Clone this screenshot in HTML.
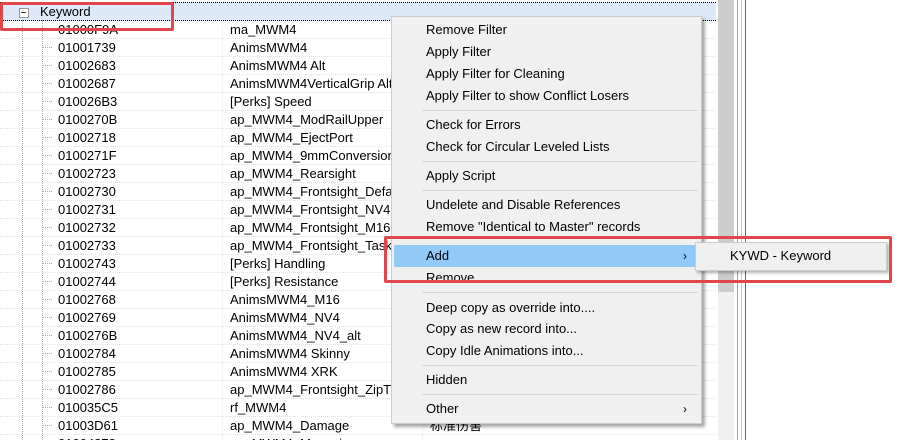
<!DOCTYPE html>
<html style="overflow:hidden;height:440px"><head><meta charset="utf-8"><style>
html,body{margin:0;width:899px;height:440px;overflow:hidden}
body{background:#fff;font-family:"Liberation Sans","Noto Sans CJK SC",sans-serif;font-size:13px;color:#000;position:relative}
.a{position:absolute;white-space:nowrap}
.hl{position:absolute;left:0;width:716px;height:0;border-top:1px dotted #e2e2e2}
.t{line-height:18px}
.mi{position:absolute;left:426px;line-height:22px;font-size:13px}
.sep{position:absolute;left:422px;width:276px;height:1px;background:#d7d7d7}
</style></head><body>
<div class="a" style="left:0;top:2px;width:716px;height:17px;background:#dde9f8;border-top:1px dotted #000;border-bottom:1px dotted #000"></div>
<div class="a" style="left:19px;top:8px;width:8px;height:8px;border:1px solid #999;background:#fff"></div>
<div class="a" style="left:21px;top:12px;width:5px;height:1px;background:#333"></div>
<div class="a t" style="left:40px;top:3px">Keyword</div>
<div class="a" style="left:22px;top:20px;height:420px;border-left:1px dotted #aaa"></div>
<div class="a" style="left:42px;top:20px;height:420px;border-left:1px dotted #aaa"></div>
<div class="a" style="left:222px;top:20px;height:420px;border-left:1px solid #f4f4f4"></div>
<div class="a" style="left:422px;top:20px;height:420px;border-left:1px solid #f4f4f4"></div>
<div id="rows"></div>
<script>
var d=[["01000F9A","ma_MWM4"],["01001739","AnimsMWM4"],["01002683","AnimsMWM4 Alt"],["01002687","AnimsMWM4VerticalGrip Alt"],["010026B3","[Perks] Speed"],["0100270B","ap_MWM4_ModRailUpper"],["01002718","ap_MWM4_EjectPort"],["0100271F","ap_MWM4_9mmConversion"],["01002723","ap_MWM4_Rearsight"],["01002730","ap_MWM4_Frontsight_Default"],["01002731","ap_MWM4_Frontsight_NV4"],["01002732","ap_MWM4_Frontsight_M16"],["01002733","ap_MWM4_Frontsight_Taskforce"],["01002743","[Perks] Handling"],["01002744","[Perks] Resistance"],["01002768","AnimsMWM4_M16"],["01002769","AnimsMWM4_NV4"],["0100276B","AnimsMWM4_NV4_alt"],["01002784","AnimsMWM4 Skinny"],["01002785","AnimsMWM4 XRK"],["01002786","ap_MWM4_Frontsight_ZipTie"],["010035C5","rf_MWM4"],["01003D61","ap_MWM4_Damage"],["01004278","ap_MWM4_Magazine"]];
var h="";
for(var i=0;i<d.length;i++){var y=20+18*i;
h+='<div class="hl" style="top:'+(y+18)+'px"></div>';
h+='<div class="a" style="left:43px;top:'+(y+9)+'px;width:9px;border-top:1px dotted #aaa"></div>';
h+='<div class="a t" style="left:58px;top:'+(y+1)+'px">'+d[i][0]+'</div>';
h+='<div class="a t" style="left:230px;top:'+(y+1)+'px;width:190px;overflow:hidden">'+d[i][1]+'</div>';}
h+='<div class="a t" style="left:430px;top:417px">标准伤害</div>';
document.getElementById("rows").innerHTML=h;
</script>
<div class="a" style="left:718px;top:0;width:16px;height:440px;background:#f0f0f0"></div>
<div class="a" style="left:718px;top:0;width:16px;height:292px;background:#cdcdcd"></div>
<div class="a" style="left:737px;top:0;width:1px;height:440px;background:#a0a0a0"></div>
<div class="a" style="left:741px;top:0;width:1px;height:440px;background:#c8c8c8"></div>
<div class="a" style="left:745px;top:0;width:1px;height:440px;background:#6a6a6a"></div>

<div class="a" style="left:391px;top:16px;width:309px;height:406px;background:#f0f0f0;border:1px solid #ccc;box-shadow:3px 3px 3px rgba(0,0,0,0.35)"></div>
<div class="a" style="left:394px;top:245px;width:301px;height:22px;background:#91c9f7"></div>
<div class="mi" style="top:19px">Remove Filter</div>
<div class="mi" style="top:41px">Apply Filter</div>
<div class="mi" style="top:63px">Apply Filter for Cleaning</div>
<div class="mi" style="top:85px">Apply Filter to show Conflict Losers</div>
<div class="sep" style="top:110px"></div>
<div class="mi" style="top:114px">Check for Errors</div>
<div class="mi" style="top:136px">Check for Circular Leveled Lists</div>
<div class="sep" style="top:161px"></div>
<div class="mi" style="top:165px">Apply Script</div>
<div class="sep" style="top:190px"></div>
<div class="mi" style="top:194px">Undelete and Disable References</div>
<div class="mi" style="top:216px">Remove "Identical to Master" records</div>
<div class="mi" style="top:245px">Add</div>
<div class="a" style="left:683px;top:245px;line-height:22px;font-size:12px">›</div>
<div class="mi" style="top:267px">Remove</div>
<div class="sep" style="top:292px"></div>
<div class="mi" style="top:297px">Deep copy as override into....</div>
<div class="mi" style="top:318px">Copy as new record into...</div>
<div class="mi" style="top:340px">Copy Idle Animations into...</div>
<div class="sep" style="top:365px"></div>
<div class="mi" style="top:369px">Hidden</div>
<div class="sep" style="top:394px"></div>
<div class="mi" style="top:398px">Other</div>
<div class="a" style="left:683px;top:398px;line-height:22px;font-size:12px">›</div>

<div class="a" style="left:695px;top:242px;width:190px;height:27px;background:#f0f0f0;border:1px solid #ccc;box-shadow:2px 2px 3px rgba(0,0,0,0.3)"></div>
<div class="a" style="left:730px;top:245px;line-height:22px">KYWD - Keyword</div>

<div class="a" style="left:384px;top:236px;width:502px;height:41px;border:3px solid #e0474c;border-radius:2px"></div>
<div class="a" style="left:0;top:2px;width:168px;height:23px;border:3px solid #e0474c;border-radius:2px"></div>
</body></html>
